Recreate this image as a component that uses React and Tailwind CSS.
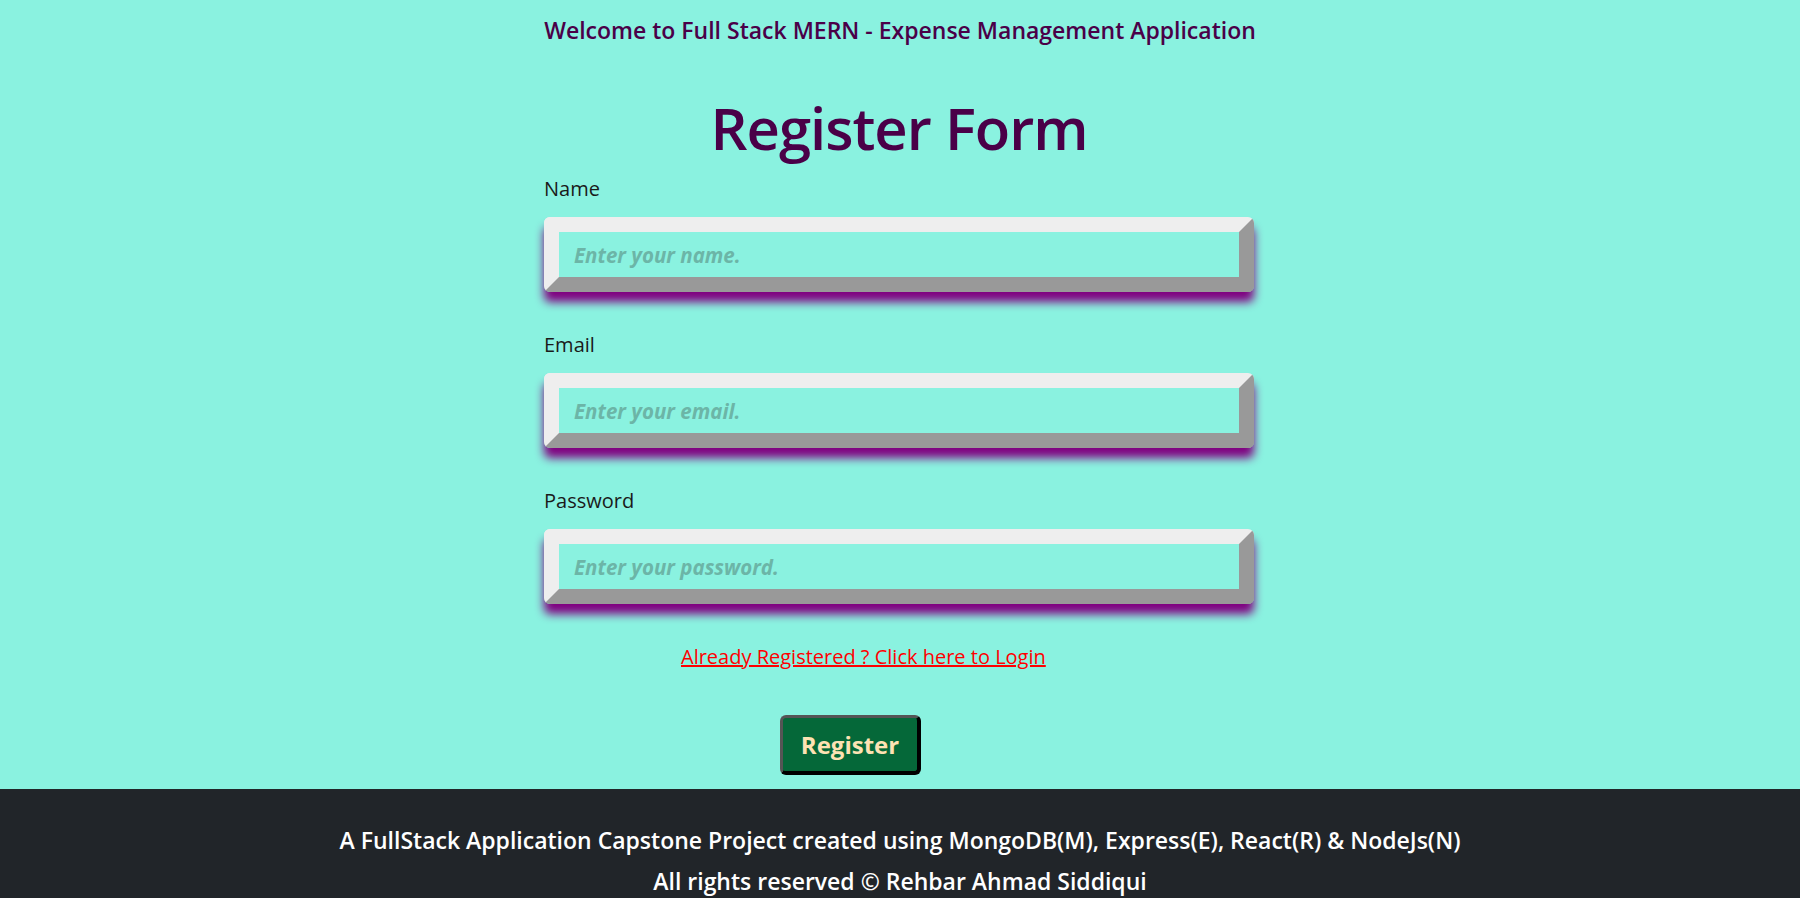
import React from 'react';

const fields = [
  { label: 'Name', type: 'text', placeholder: 'Enter your name.' },
  { label: 'Email', type: 'email', placeholder: 'Enter your email.' },
  { label: 'Password', type: 'password', placeholder: 'Enter your password.' },
];

export default function App() {
  return (
    <div className="bg-[#8af2e0] font-['Open_Sans',sans-serif]">
      <main>
        <h4 className="pt-[14px] text-center text-[23px] font-semibold leading-[32px] text-[#4a0048]">
          Welcome to Full Stack MERN - Expense Management Application
        </h4>

        <div className="mx-auto mt-[44px] w-[710px] -translate-x-[1px]">
          <h1 className="text-center text-[58px] font-semibold leading-[76px] tracking-[-1px] text-[#4a0048]">
            Register Form
          </h1>

          <form className="mt-[10px]" onSubmit={(e) => e.preventDefault()}>
            {fields.map((f, i) => (
              <div key={f.label} className={i > 0 ? 'mt-[40px]' : ''}>
                <label className="block text-[20px] leading-[26px] text-[#1a1a1a]">{f.label}</label>
                <input
                  type={f.type}
                  placeholder={f.placeholder}
                  className="mt-[15px] block h-[75px] w-full rounded-md border-[15px] border-t-[#eeeeee] border-r-[#999999] border-b-[#999999] border-l-[#eeeeee] bg-transparent px-[15px] text-[20.5px] font-bold italic text-[#333] shadow-[0_10px_10px_#800080] outline-none placeholder:text-[#6cb5a7]"
                />
              </div>
            ))}

            <div className="mt-[40px] pl-[137px]">
              <a href="#" className="text-[20px] leading-[26px] text-[#ff0000] underline">
                Already Registered ? Click here to Login
              </a>
            </div>

            <div className="mt-[45px] pb-[14px] pl-[236px]">
              <button
                type="submit"
                className="block h-[60px] w-[141px] rounded-md border-[3px] border-t-[#555] border-l-[#555] border-r-black border-b-black border-r-[4px] border-b-[4px] bg-[#056839] text-[24px] font-bold text-[#fde2b3]"
              >
                Register
              </button>
            </div>
          </form>
        </div>
      </main>

      <footer className="bg-[#212529] pb-[10px] pt-[31px] text-center text-[23px] font-semibold leading-[41px] text-white">
        <p>A FullStack Application Capstone Project created using MongoDB(M), Express(E), React(R) &amp; NodeJs(N)</p>
        <p>All rights reserved © Rehbar Ahmad Siddiqui</p>
      </footer>
    </div>
  );
}
